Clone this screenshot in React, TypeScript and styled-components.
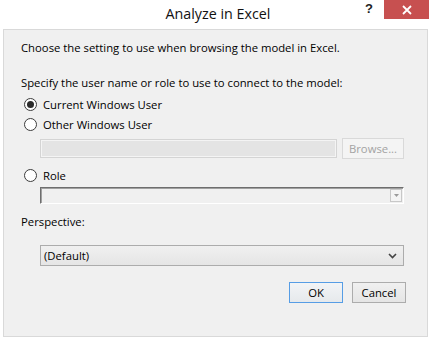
import styled, { createGlobalStyle } from "styled-components";

const GlobalStyle = createGlobalStyle`
  html, body {
    margin: 0;
    padding: 0;
    background: #ffffff;
  }
  body {
    font-family: "Open Sans", "Noto Sans", sans-serif;
    color: #000;
  }
`;

export default function App() {
  return (
    <>
      <GlobalStyle />
      <Window>
        <TitleBar>
          <Title>Analyze in Excel</Title>
          <HelpMark>?</HelpMark>
          <CloseButton>
            <svg width="10" height="10" viewBox="0 0 10 10">
              <path d="M1 1 L9 9 M9 1 L1 9" stroke="#fff" strokeWidth="1.8" />
            </svg>
          </CloseButton>
        </TitleBar>

        <Panel>
          <Label $top={0}>Choose the setting to use when browsing the model in Excel.</Label>
          <Label $top={19}>Specify the user name or role to use to connect to the model:</Label>

          <RadioRow $top={3}>
            <Radio $checked />
            <span>Current Windows User</span>
          </RadioRow>
          <RadioRow $top={0}>
            <Radio />
            <span>Other Windows User</span>
          </RadioRow>

          <IndentRow $top={4}>
            <TextBox />
            <BrowseButton>Browse...</BrowseButton>
          </IndentRow>

          <RadioRow $top={6}>
            <Radio />
            <span>Role</span>
          </RadioRow>
          <IndentRow $top={2}>
            <RoleCombo>
              <DropBox>
                <svg width="5" height="3" viewBox="0 0 5 3">
                  <path d="M0 0 L5 0 L2.5 3 Z" fill="#9a9a9a" />
                </svg>
              </DropBox>
            </RoleCombo>
          </IndentRow>

          <Label $top={10}>Perspective:</Label>
          <IndentRow $top={15}>
            <Select>
              <span>(Default)</span>
              <svg width="9" height="6" viewBox="0 0 9 6">
                <path d="M1 1 L4.5 4.5 L8 1" stroke="#444" strokeWidth="1.6" fill="none" />
              </svg>
            </Select>
          </IndentRow>

          <ButtonRow>
            <DialogButton $primary>OK</DialogButton>
            <DialogButton>Cancel</DialogButton>
          </ButtonRow>
        </Panel>
      </Window>
    </>
  );
}

const Window = styled.div`
  width: 436px;
  height: 345px;
  background: #ffffff;
  display: flex;
  flex-direction: column;
`;

const TitleBar = styled.div`
  position: relative;
  height: 29px;
  display: flex;
  justify-content: center;
  align-items: flex-start;
`;

const Title = styled.div`
  margin-top: 4px;
  font-size: 14.3px;
  line-height: 20px;
  color: #111;
`;

const HelpMark = styled.div`
  position: absolute;
  left: 365px;
  top: 1px;
  font-family: "Liberation Sans", sans-serif;
  font-weight: 700;
  font-size: 13px;
  color: #222;
`;

const CloseButton = styled.div`
  position: absolute;
  left: 384px;
  top: 0;
  width: 45px;
  height: 19px;
  background: #c75050;
  display: flex;
  align-items: center;
  justify-content: center;
`;

const Panel = styled.div`
  margin-left: 3px;
  width: 425px;
  height: 308px;
  border: 1px solid #d9d9d9;
  background: #f0f0f0;
  padding: 10px 23px 0 17px;
  box-sizing: border-box;
  display: flex;
  flex-direction: column;
  font-size: 11.3px;
`;

const Label = styled.div<{ $top: number }>`
  margin-top: ${(p) => p.$top}px;
  height: 16px;
  line-height: 16px;
  white-space: nowrap;
`;

const RadioRow = styled.div<{ $top: number }>`
  margin-top: ${(p) => p.$top}px;
  height: 20px;
  display: flex;
  align-items: center;
  gap: 6px;
  padding-left: 3px;
  white-space: nowrap;
`;

const Radio = styled.span<{ $checked?: boolean }>`
  width: 11px;
  height: 11px;
  border-radius: 50%;
  border: 1px solid #3c3c3c;
  background: #fff;
  display: flex;
  align-items: center;
  justify-content: center;

  &::after {
    content: "";
    width: 7px;
    height: 7px;
    border-radius: 50%;
    background: #2b2b2b;
    display: ${(p) => (p.$checked ? "block" : "none")};
  }
`;

const IndentRow = styled.div<{ $top: number }>`
  margin-top: ${(p) => p.$top}px;
  padding-left: 19px;
  display: flex;
  align-items: center;
  gap: 5px;
`;

const TextBox = styled.div`
  flex: 1;
  height: 19px;
  box-sizing: border-box;
  background: #e4e4e4;
  border: 1px solid #d4d4d4;
  box-shadow: inset 0 0 0 1px #f4f4f4;
`;

const BrowseButton = styled.div`
  width: 62px;
  height: 21px;
  box-sizing: border-box;
  border: 1px solid #d9d9d9;
  background: #f4f4f4;
  color: #a3a3a3;
  display: flex;
  align-items: center;
  justify-content: center;
`;

const RoleCombo = styled.div`
  flex: 1;
  height: 17px;
  box-sizing: border-box;
  border-top: 1px solid #6e6e6e;
  border-left: 1px solid #6e6e6e;
  border-right: 1px solid #ffffff;
  border-bottom: 1px solid #ffffff;
  box-shadow: inset 1px 1px 0 #a0a0a0;
  background: #f0f0f0;
  display: flex;
  justify-content: flex-end;
  align-items: center;
  padding-right: 1px;
`;

const DropBox = styled.div`
  width: 12px;
  height: 13px;
  box-sizing: border-box;
  border: 1px solid #c8c8c8;
  background: #f4f4f4;
  display: flex;
  align-items: center;
  justify-content: center;
`;

const Select = styled.div`
  flex: 1;
  height: 21px;
  box-sizing: border-box;
  border: 1px solid #acacac;
  background: linear-gradient(#f0f0f0, #e5e5e5);
  display: flex;
  align-items: center;
  justify-content: space-between;
  padding: 0 6px 0 3px;
`;

const ButtonRow = styled.div`
  margin-top: 16px;
  display: flex;
  justify-content: flex-end;
  gap: 9px;
  margin-right: -2px;
`;

const DialogButton = styled.div<{ $primary?: boolean }>`
  width: 54px;
  height: 21px;
  box-sizing: border-box;
  border: 1px solid ${(p) => (p.$primary ? "#569de5" : "#acacac")};
  background: ${(p) => (p.$primary ? "linear-gradient(#f2f4f6, #e6e9ec)" : "linear-gradient(#f0f0f0, #e5e5e5)")};
  display: flex;
  align-items: center;
  justify-content: center;
`;
